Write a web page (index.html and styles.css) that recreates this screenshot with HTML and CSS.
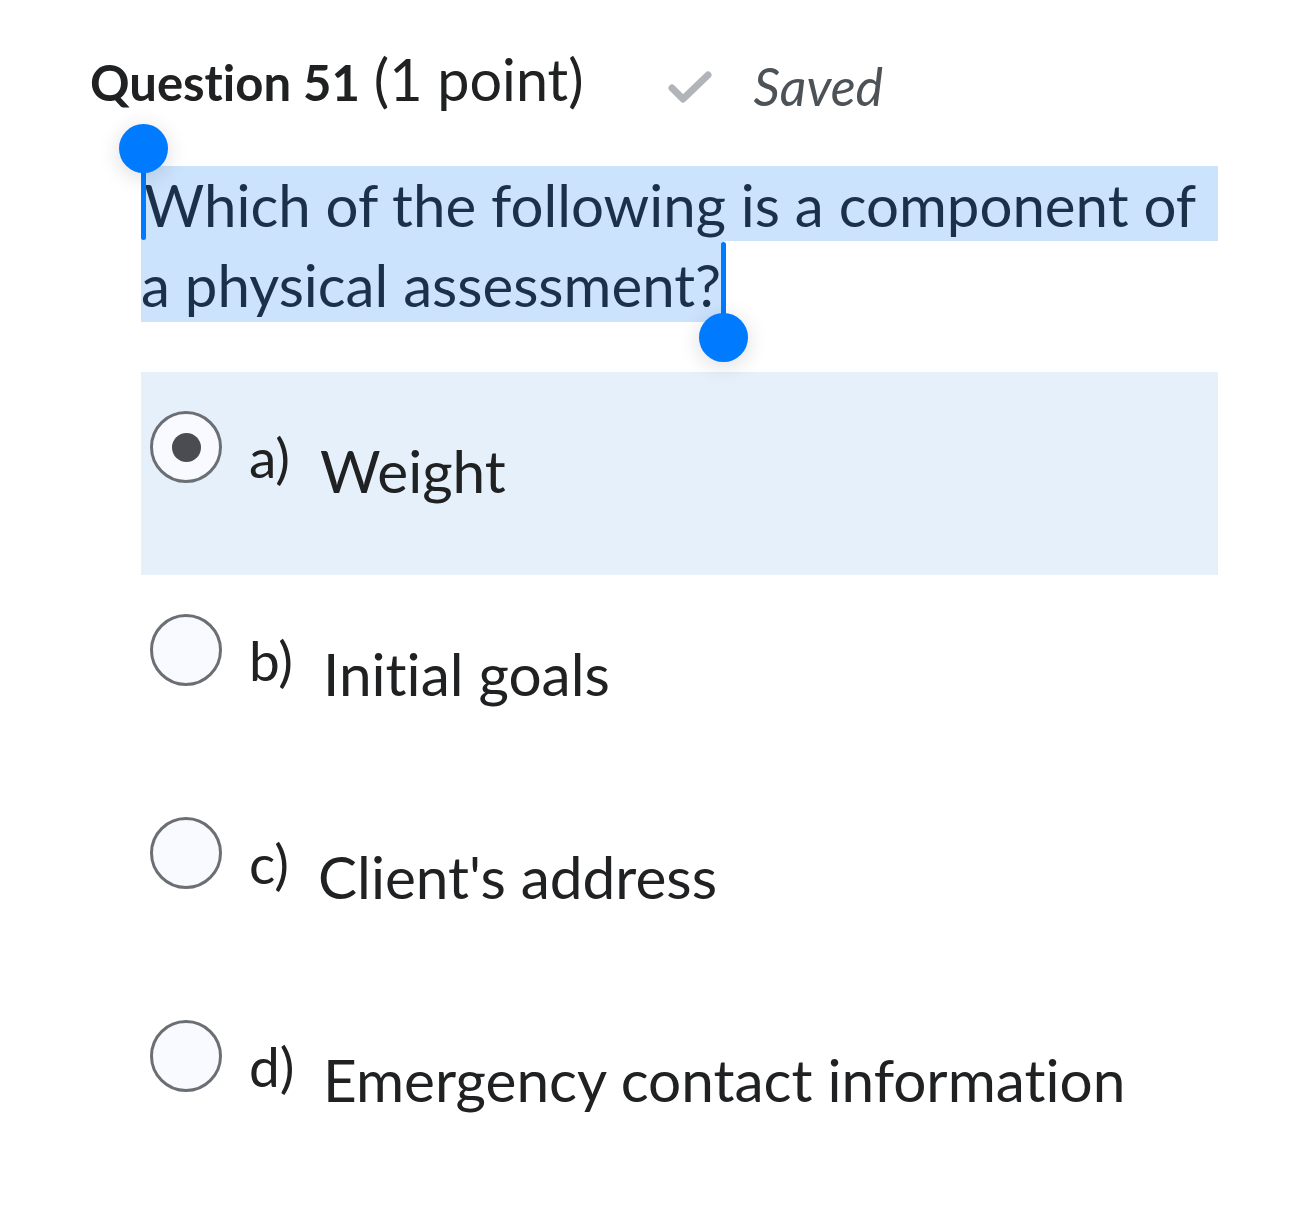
FILE: index.html
```html
<!DOCTYPE html>
<html lang="en">
<head>
<meta charset="utf-8">
<title>Question 51</title>
<link rel="stylesheet" href="styles.css">
</head>
<body>
<main class="page">
  <header class="q-header">
    <span class="q-num">Question 51</span>
    <span class="q-points">(1 point)</span>
    <svg class="check" width="46" height="34" viewBox="0 0 46 34" aria-hidden="true">
      <path d="M5 18 L16 29 L41 5" fill="none" stroke="#b1b5b9" stroke-width="7" stroke-linecap="round" stroke-linejoin="round"/>
    </svg>
    <span class="saved-text">Saved</span>
  </header>

  <section class="question">
    <div class="q-text">
      <div class="sel-line sel-line-1">Which of the following is a component of</div>
      <div class="sel-line sel-line-2">a physical assessment?</div>
    </div>
    <span class="handle handle-start" aria-hidden="true"></span>
    <span class="handle handle-end" aria-hidden="true"></span>
  </section>

  <ul class="options">
    <li class="option option-selected">
      <span class="radio radio-checked"></span>
      <span class="opt-label">a)</span>
      <span class="opt-text">Weight</span>
    </li>
    <li class="option">
      <span class="radio"></span>
      <span class="opt-label opt-label-wide">b)</span>
      <span class="opt-text">Initial goals</span>
    </li>
    <li class="option">
      <span class="radio"></span>
      <span class="opt-label opt-label-narrow">c)</span>
      <span class="opt-text">Client's address</span>
    </li>
    <li class="option">
      <span class="radio"></span>
      <span class="opt-label opt-label-wide">d)</span>
      <span class="opt-text">Emergency contact information</span>
    </li>
  </ul>
</main>
</body>
</html>
```

FILE: styles.css
```css
html, body {
  margin: 0;
  padding: 0;
  background: #ffffff;
}

body {
  font-family: Lato, "Open Sans", "Liberation Sans", sans-serif;
  color: #202122;
  font-variant-ligatures: none;
}

.page {
  width: 1290px;
  height: 1219px;
  overflow: hidden;
}

/* Header */
.q-header {
  display: flex;
  align-items: flex-start;
  height: 65px;
  padding: 50px 0 0 90px;
  white-space: nowrap;
}

.q-num {
  margin-top: 3px;
  font-size: 49px;
  line-height: 58px;
  font-weight: 700;
  color: #202122;
}

.q-points {
  margin-left: 14px;
  font-size: 57.5px;
  line-height: 58px;
  font-weight: 400;
  color: #202122;
}

.check {
  flex: none;
  margin: 20px 0 0 83px;
}

.saved-text {
  margin: 6px 0 0 41px;
  font-size: 52px;
  line-height: 60px;
  font-style: italic;
  color: #4d5257;
}

/* Question text with selection */
.question {
  position: relative;
  margin: 51px 0 0 141px;
  width: 1077px;
}

.q-text {
  font-size: 58.2px;
  color: #1b3149;
}

.sel-line {
  background: #cce3fd;
  white-space: nowrap;
  line-height: 73px;
}

.sel-line-1 {
  padding: 2px 0 0 3px;
}

.sel-line-2 {
  display: inline-block;
  vertical-align: top;
  padding: 7px 3px 1px 0;
}

.handle {
  position: absolute;
  width: 5px;
  background: #007aff;
  border-radius: 3px;
}

.handle::after {
  content: "";
  position: absolute;
  left: -22px;
  width: 49px;
  height: 49px;
  border-radius: 50%;
  background: #007aff;
  box-shadow: 0 4px 22px rgba(0, 0, 0, 0.14);
}

.handle-start {
  left: 0;
  top: -18px;
  height: 92px;
}

.handle-start::after {
  top: -24px;
}

.handle-end {
  left: 580px;
  top: 76px;
  height: 95px;
}

.handle-end::after {
  top: 71px;
}

/* Options */
.options {
  list-style: none;
  margin: 50px 0 0 141px;
  padding: 0;
  width: 1077px;
}

.option {
  display: flex;
  align-items: flex-start;
  height: 203px;
  box-sizing: border-box;
  padding: 39px 0 0 9px;
}

.option-selected {
  background: #e6f0fb;
}

.radio {
  flex: none;
  width: 66px;
  height: 66px;
  border: 3px solid #6b6f73;
  border-radius: 50%;
  background: #f8faff;
  display: flex;
  align-items: center;
  justify-content: center;
}

.radio-checked::before {
  content: "";
  width: 29px;
  height: 29px;
  border-radius: 50%;
  background: #494c50;
}

.opt-label {
  flex: none;
  width: 71px;
  margin: 13px 0 0 27px;
  font-size: 55px;
  line-height: 66px;
  color: #202122;
}

.opt-label-wide {
  width: 74px;
}

.opt-label-narrow {
  width: 69px;
}

.opt-text {
  margin-top: 24px;
  font-size: 58.5px;
  line-height: 70px;
  color: #202122;
  white-space: nowrap;
}
```
